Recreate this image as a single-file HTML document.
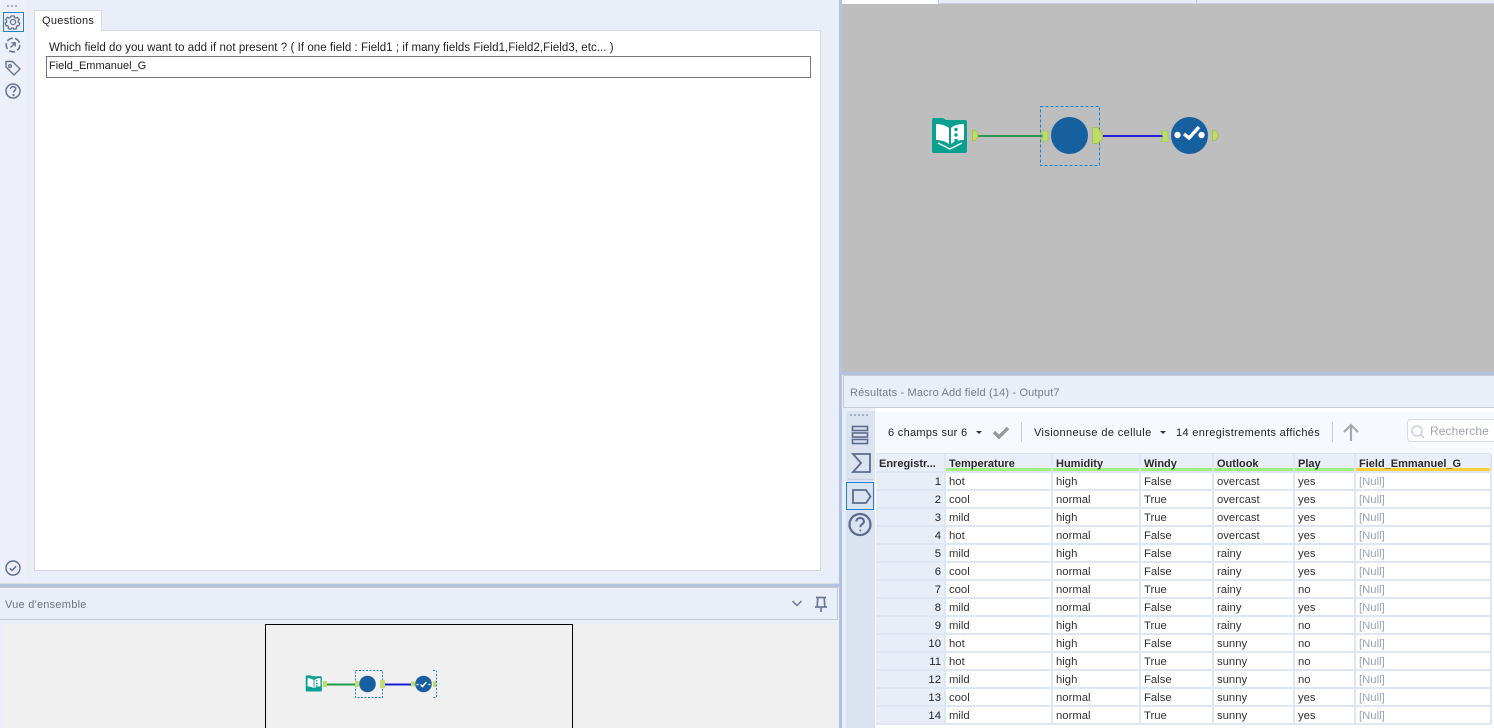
<!DOCTYPE html>
<html><head><meta charset="utf-8"><style>
html,body{margin:0;padding:0;width:1494px;height:728px;overflow:hidden;background:#fff}
body{position:relative;font-family:"Liberation Sans",sans-serif;font-size:11px;color:#222}
.a{position:absolute;box-sizing:border-box}
.t{position:absolute;white-space:nowrap;line-height:14px}
table{position:absolute;left:876px;top:454px;border-collapse:collapse;table-layout:fixed;width:615px}
td,th{padding:2px 0 0 3px;height:14px;line-height:14px;font-weight:normal;text-align:left;background:#fff;border:solid #dfe6f3;border-width:0 2px 2px 0;box-sizing:content-box;overflow:hidden;white-space:nowrap;font-size:11.3px;color:#333}
tr td:first-child{background:#e8edf8;text-align:right;padding:2px 3px 0 0;color:#222}
th{height:14px;padding-top:3px;line-height:14px;font-size:11px;font-weight:bold;background:#e9eef8;color:#2b2b2b;border-bottom:0}
tr.h th{box-shadow:inset 0 -3px 0 #a0f07c}
tr.h th:first-child{box-shadow:none}
tr.h th:last-child{box-shadow:inset 0 -3px 0 #ffcf33}
tr.g td{height:2px;line-height:2px;font-size:0;border:0;background:#dfe6f3;padding:0}
td.n{color:#9aa3bb}
</style></head><body>
<!-- left panel -->
<div class="a" style="left:0;top:0;width:839px;height:728px;background:#e9eef9"></div>
<div class="a" style="left:0;top:0;width:26px;height:580px;background:#edf0fa"></div>
<div class="a" style="left:7px;top:5px;width:10px;height:2px;background-image:linear-gradient(90deg,#a9afbd 2px,transparent 2px);background-size:4px 2px"></div>
<div class="a" style="left:3px;top:12px;width:21px;height:20px;border:1px solid #1d84d6"></div>
<svg class="a" style="left:0;top:0" width="30" height="105" viewBox="0 0 30 105" fill="none" stroke="#66738f" stroke-width="1.300">
<g transform="translate(13 22) scale(.86) translate(-13 -22.500)"><path d="M10.600 15.500h3.800l.5 1.800 1.600.7 1.700-.9 2 2.600-1.200 1.400.2 1.800 1.600.9-.9 3-1.900-.1-1.100 1.400.4 1.900-3 1.100-1.100-1.500h-1.800l-1 1.500-3-1.100.4-1.900-1.200-1.400-1.800.1-.9-3 1.600-.9.2-1.800-1.200-1.400 2-2.600 1.700.9 1.600-.7z" stroke-width="1.500"/>
<circle cx="13" cy="22.500" r="3" stroke-width="1.500"/></g>
<circle cx="13" cy="45" r="6.800" stroke-width="1.600" stroke-dasharray="6 2.500"/>
<path d="M10.500 47.500l4.500-4.500M11.500 42.800h3.700v3.700" stroke-width="1.400"/>
<path d="M6 61.500h6.500l7.500 7.500-6 6-8-8z" stroke-width="1.400"/>
<circle cx="10" cy="66" r="1.300"/>
<circle cx="13" cy="91" r="7" stroke-width="1.500"/>
<path d="M10.500 89c.2-3.200 5.300-3 5.200 0 0 1.800-2.200 1.700-2.200 3.500" stroke-width="1.500"/>
<circle cx="13.500" cy="95" r=".5"/>
</svg>
<svg class="a" style="left:4px;top:559px" width="18" height="18" fill="none" stroke="#5b6b8f" stroke-width="1.400"><circle cx="9" cy="9" r="7"/><path d="M5.800 9.200l2.200 2.200 4.200-4.200"/></svg>

<div class="a" style="left:34px;top:30px;width:787px;height:541px;background:#fff;border:1px solid #d5d8de"></div>
<div class="a" style="left:34px;top:10px;width:68px;height:21px;background:#fff;border:1px solid #d5d8de;border-bottom:0"></div>
<div class="t" style="left:42px;top:14px;color:#222;letter-spacing:.3px">Questions</div>
<div class="t" style="left:49px;top:41px;color:#222;font-size:11.5px;letter-spacing:.05px">Which field do you want to add if not present ? ( If one field : Field1 ; if many fields Field1,Field2,Field3, etc... )</div>
<div class="a" style="left:46px;top:56px;width:765px;height:22px;background:#fff;border:1px solid #777"></div>
<div class="t" style="left:49px;top:59px">Field_Emmanuel_G</div>

<!-- overview -->
<div class="a" style="left:0;top:583px;width:839px;height:1px;background:#dcdcdc"></div>
<div class="a" style="left:0;top:584px;width:839px;height:3px;background:#b1c2e3"></div>
<div class="a" style="left:0;top:587px;width:838px;height:33px;background:#e9eef9;border-top:1px solid #c6c8cc;border-bottom:1px solid #c6c8cc;border-right:1px solid #c6c8cc"></div>
<div class="t" style="left:5px;top:598px;color:#6f7480;letter-spacing:.25px">Vue d'ensemble</div>
<svg class="a" style="left:790px;top:596px" width="40" height="18" fill="none" stroke="#6a7896" stroke-width="1.700"><path d="M2.500 5l4.500 4.500 4.500-4.500" stroke-width="1.500"/><path d="M26 1.500h10M27.800 1.500l-.6 9M34.200 1.500l.6 9M25 11h12M31 11v5"/></svg>
<div class="a" style="left:2px;top:624px;width:836px;height:104px;background:#efefef"></div>
<div class="a" style="left:265px;top:624px;width:308px;height:104px;border:1px solid #000;border-bottom:0;background:#f0f0f0"></div>
<svg class="a" style="left:300px;top:665px" width="145" height="40" viewBox="0 0 145 40">
<g transform="translate(-9 -2.500) scale(.46)">
<path d="M32 30a2 2 0 0 1 2-2h9l3 2h19a2 2 0 0 1 2 2v29a2 2 0 0 1-2 2H34a2 2 0 0 1-2-2z" fill="#0aa08f"/>
<path d="M36 34c4 0 9 1 13 4v18c-4-3-9-4-13-4z" fill="#fff"/><path d="M51 38c3-3 8-4 13-4v18c-5 0-10 1-13 4z" fill="#fff"/>
<circle cx="56" cy="40" r="1.800" fill="#0aa08f"/><circle cx="56" cy="45.500" r="1.800" fill="#0aa08f"/><circle cx="56" cy="51" r="1.800" fill="#0aa08f"/>
</g>
<rect x="23" y="16" width="4" height="6" fill="#c0dc70"/>
<path d="M27 19.500h29" stroke="#1f9a4e" stroke-width="2"/>
<rect x="55.500" y="5.500" width="27" height="27" fill="none" stroke="#1d84d6" stroke-dasharray="2 1.500"/>
<rect x="55" y="16" width="4" height="6" fill="#c0dc70"/>
<circle cx="67.500" cy="19" r="8.300" fill="#17609f"/>
<rect x="80" y="15" width="5" height="8" fill="#c0dc70"/>
<path d="M85 19.500h28" stroke="#1a1ad8" stroke-width="2"/>
<rect x="111" y="16.500" width="4" height="5" fill="#c0dc70"/>
<circle cx="123.500" cy="19" r="8.300" fill="#17609f"/>
<path d="M116.500 19.500h2M128.500 19.500h2M120.500 19.500l2 2 4-4.500" stroke="#fff" stroke-width="1.500" fill="none"/>
<rect x="133" y="16" width="3" height="6" fill="#c0dc70"/>
<path d="M133 5.500h3.500v27H133" fill="none" stroke="#1d84d6" stroke-dasharray="2 1.500"/>
</svg>

<!-- splitter -->
<div class="a" style="left:839px;top:0;width:3px;height:728px;background:#b1c2e3"></div>
<div class="a" style="left:842px;top:0;width:652px;height:728px;background:#e9eef9"></div>

<!-- canvas -->
<div class="a" style="left:842px;top:0;width:652px;height:372px;background:#bebebe"></div>
<div class="a" style="left:842px;top:0;width:652px;height:4px;background:#e6ebf8;border-bottom:1px solid #c5d0e6"></div>
<div class="a" style="left:842px;top:0;width:96px;height:4px;background:#fff"></div>
<div class="a" style="left:938px;top:0;width:1px;height:4px;background:#c5d0e6"></div>
<div class="a" style="left:1196px;top:0;width:1px;height:4px;background:#c5d0e6"></div>
<svg class="a" style="left:900px;top:90px" width="340" height="90" viewBox="0 0 340 90">
<path d="M32 30a2 2 0 0 1 2-2h9l3 2h19a2 2 0 0 1 2 2v29a2 2 0 0 1-2 2H34a2 2 0 0 1-2-2z" fill="#0aa08f"/>
<path d="M36 34c4 0 9 1 13 4v16c-4-3-9-4-13-4z" fill="#fff"/>
<path d="M51 38c3-3 8-4 13-4v16c-5 0-10 1-13 4z" fill="#fff"/>
<circle cx="56" cy="39.500" r="1.700" fill="#0aa08f"/><circle cx="56" cy="45" r="1.700" fill="#0aa08f"/><circle cx="56" cy="50.500" r="1.700" fill="#0aa08f"/>
<path d="M38 53l12 6 12-6" stroke="#fff" stroke-width="1.300" fill="none"/>
<path d="M72.500 40.500h3l2.500 3v3.500l-2.500 3.500h-3z" fill="#bedc68" stroke="#a4c24e"/>
<path d="M78 46h65" stroke="#2f9a58" stroke-width="2"/>
<path d="M141 41h7v10h-7l2-5z" fill="#bedc68" stroke="#a4c24e" stroke-width=".8"/>
<rect x="140.500" y="16.500" width="59" height="59" fill="none" stroke="#1782da" stroke-dasharray="3 2"/>
<circle cx="169.500" cy="45.500" r="18.500" fill="#17609f"/>
<path d="M192.500 37.500h5l5 6.500v5l-5 4.500h-5z" fill="#bedc68" stroke="#a4c24e"/>
<path d="M203 46h60" stroke="#2a22d8" stroke-width="2"/>
<path d="M261 41h7v10.500h-7l2-5z" fill="#bedc68" stroke="#a4c24e" stroke-width=".8"/>
<circle cx="289.500" cy="45.500" r="18.500" fill="#17609f"/>
<circle cx="277.500" cy="45" r="3.200" fill="#fff"/><circle cx="301.500" cy="45" r="3.200" fill="#fff"/>
<path d="M284 44l5 4 10-11" stroke="#fff" stroke-width="3.400" fill="none"/>
<path d="M312.500 40.500h3l2.500 3v3.500l-2.500 3.500h-3z" fill="#bedc68" stroke="#a4c24e"/>
</svg>

<!-- results -->
<div class="a" style="left:842px;top:372px;width:652px;height:3px;background:#b1c2e3"></div>
<div class="a" style="left:843px;top:375px;width:651px;height:33px;background:#e9eef9;border:1px solid #c8cbd2;border-right:0"></div>
<div class="t" style="left:850px;top:386px;color:#777c88;letter-spacing:.16px">Résultats - Macro Add field (14) - Output7</div>
<div class="a" style="left:875px;top:408px;width:619px;height:320px;background:#fff"></div>
<div class="a" style="left:846px;top:411px;width:29px;height:317px;background:#dbe2f0;border-radius:4px 0 0 0"></div>
<div class="a" style="left:850px;top:414px;width:20px;height:2px;background-image:linear-gradient(90deg,#a3adc3 2px,transparent 1px);background-size:4px 2px"></div>
<div class="a" style="left:875px;top:412px;width:619px;height:41px;background:#f6f9fe"></div>
<svg class="a" style="left:846px;top:420px" width="30" height="125" viewBox="0 0 30 125" fill="none" stroke="#5b6b8f" stroke-width="1.600">
<rect x="6.500" y="6.500" width="15" height="4"/><rect x="6.500" y="13" width="15" height="4"/><rect x="6.500" y="19.500" width="15" height="4"/>
<path d="M24 34H7l8 9-8 9h17z" stroke-width="1.800"/>
<path d="M7 70h13l4.500 6.500L20 83H7z" stroke-width="1.800"/>
<circle cx="14" cy="104.500" r="10.500" stroke-width="2.200"/>
<path d="M10.300 101.500c.2-4.800 7.800-4.500 7.600 0 0 2.800-3.600 2.600-3.600 5.600" stroke-width="2"/>
<circle cx="14.300" cy="110.500" r="1" fill="#5b6b8f" stroke="none"/>
</svg>
<div class="a" style="left:848px;top:479px;width:25px;height:1px;background:#c5ccdc"></div>
<div class="a" style="left:846px;top:482px;width:28px;height:28px;border:1px solid #1d84d6"></div>
<div class="t" style="left:888px;top:426px;letter-spacing:.3px">6 champs sur 6</div>
<svg class="a" style="left:975px;top:421px" width="40" height="22"><path d="M1 10h6l-3 3z" fill="#333"/><path d="M19 11l5 5 9-9" fill="none" stroke="#9a9a9a" stroke-width="3.500"/></svg>
<div class="a" style="left:1021px;top:422px;width:1px;height:20px;background:#c8cdd6"></div>
<div class="t" style="left:1034px;top:426px;letter-spacing:.38px">Visionneuse de cellule</div>
<svg class="a" style="left:1158px;top:426px" width="10" height="12"><path d="M2 5h6l-3 3z" fill="#333"/></svg>
<div class="t" style="left:1176px;top:426px;letter-spacing:.34px">14 enregistrements affichés</div>
<div class="a" style="left:1332px;top:422px;width:1px;height:20px;background:#c8cdd6"></div>
<svg class="a" style="left:1341px;top:422px" width="20" height="20" fill="none" stroke="#a9a9a9" stroke-width="2.200"><path d="M10 19V3M3 10l7-7 7 7"/></svg>
<div class="a" style="left:1407px;top:419px;width:87px;height:23px;background:#fff;border:1px solid #d5dbe6;border-right:0;border-radius:4px 0 0 4px"></div>
<svg class="a" style="left:1410px;top:424px" width="16" height="16" fill="none" stroke="#c3cbda" stroke-width="1.300"><circle cx="7" cy="7" r="5"/><path d="M11 11l3 3"/></svg>
<div class="t" style="left:1430px;top:424px;color:#a0a4ac;font-size:12px;letter-spacing:.1px">Recherche</div>

<div class="a" style="left:876px;top:453px;width:615px;height:270px;background:#dfe6f3"></div>
<table>
<colgroup><col style="width:69px"><col style="width:107px"><col style="width:88px"><col style="width:73px"><col style="width:81px"><col style="width:61px"><col style="width:136px"></colgroup>
<tr class="h"><th>Enregistr...</th><th>Temperature</th><th>Humidity</th><th>Windy</th><th>Outlook</th><th>Play</th><th>Field_Emmanuel_G</th></tr>
<tr class="g"><td colspan="7"></td></tr>
<tr><td>1</td><td>hot</td><td>high</td><td>False</td><td>overcast</td><td>yes</td><td class="n">[Null]</td></tr>
<tr><td>2</td><td>cool</td><td>normal</td><td>True</td><td>overcast</td><td>yes</td><td class="n">[Null]</td></tr>
<tr><td>3</td><td>mild</td><td>high</td><td>True</td><td>overcast</td><td>yes</td><td class="n">[Null]</td></tr>
<tr><td>4</td><td>hot</td><td>normal</td><td>False</td><td>overcast</td><td>yes</td><td class="n">[Null]</td></tr>
<tr><td>5</td><td>mild</td><td>high</td><td>False</td><td>rainy</td><td>yes</td><td class="n">[Null]</td></tr>
<tr><td>6</td><td>cool</td><td>normal</td><td>False</td><td>rainy</td><td>yes</td><td class="n">[Null]</td></tr>
<tr><td>7</td><td>cool</td><td>normal</td><td>True</td><td>rainy</td><td>no</td><td class="n">[Null]</td></tr>
<tr><td>8</td><td>mild</td><td>normal</td><td>False</td><td>rainy</td><td>yes</td><td class="n">[Null]</td></tr>
<tr><td>9</td><td>mild</td><td>high</td><td>True</td><td>rainy</td><td>no</td><td class="n">[Null]</td></tr>
<tr><td>10</td><td>hot</td><td>high</td><td>False</td><td>sunny</td><td>no</td><td class="n">[Null]</td></tr>
<tr><td>11</td><td>hot</td><td>high</td><td>True</td><td>sunny</td><td>no</td><td class="n">[Null]</td></tr>
<tr><td>12</td><td>mild</td><td>high</td><td>False</td><td>sunny</td><td>no</td><td class="n">[Null]</td></tr>
<tr><td>13</td><td>cool</td><td>normal</td><td>False</td><td>sunny</td><td>yes</td><td class="n">[Null]</td></tr>
<tr><td>14</td><td>mild</td><td>normal</td><td>True</td><td>sunny</td><td>yes</td><td class="n">[Null]</td></tr>
</table>
</body></html>
